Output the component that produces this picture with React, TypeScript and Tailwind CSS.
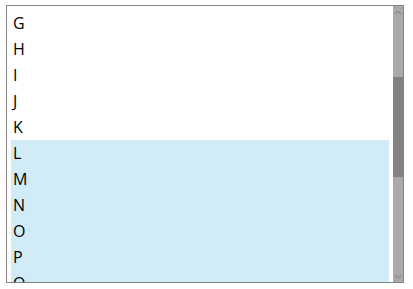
import React from 'react'

const items = ['G', 'H', 'I', 'J', 'K', 'L', 'M', 'N', 'O', 'P', 'Q']
const selected = new Set(['L', 'M', 'N', 'O', 'P', 'Q'])

function Chevron({ up }: { up?: boolean }) {
  return (
    <svg width="8" height="5" viewBox="0 0 8 5" className="block">
      <path
        d={up ? 'M1 4 L4 1 L7 4' : 'M1 1 L4 4 L7 1'}
        fill="none"
        stroke="#8a8a8a"
        strokeWidth="1.2"
      />
    </svg>
  )
}

export default function App() {
  return (
    <div className="pt-[5px] pl-[6px] bg-white h-[289px]">
      <div className="w-[398px] h-[278px] border border-[#838383] flex bg-white">
        <div className="flex-1 overflow-hidden px-[4px] pt-[4px]">
          {items.map((it) => (
            <div
              key={it}
              className={`h-[26px] flex items-center pl-[2px] text-[16px] text-black ${
                selected.has(it) ? 'bg-[#d1ebf7]' : ''
              }`}
              style={{ fontFamily: '"Open Sans", "Noto Sans", sans-serif' }}
            >
              {it}
            </div>
          ))}
        </div>
        <div className="w-[10px] bg-[#a9a9a9] flex flex-col items-center">
          <div className="h-[12px] flex items-center justify-center">
            <Chevron up />
          </div>
          <div className="h-[59px]" />
          <div className="h-[100px] w-full bg-[#828282]" />
          <div className="flex-1" />
          <div className="h-[12px] flex items-center justify-center">
            <Chevron />
          </div>
        </div>
      </div>
    </div>
  )
}
